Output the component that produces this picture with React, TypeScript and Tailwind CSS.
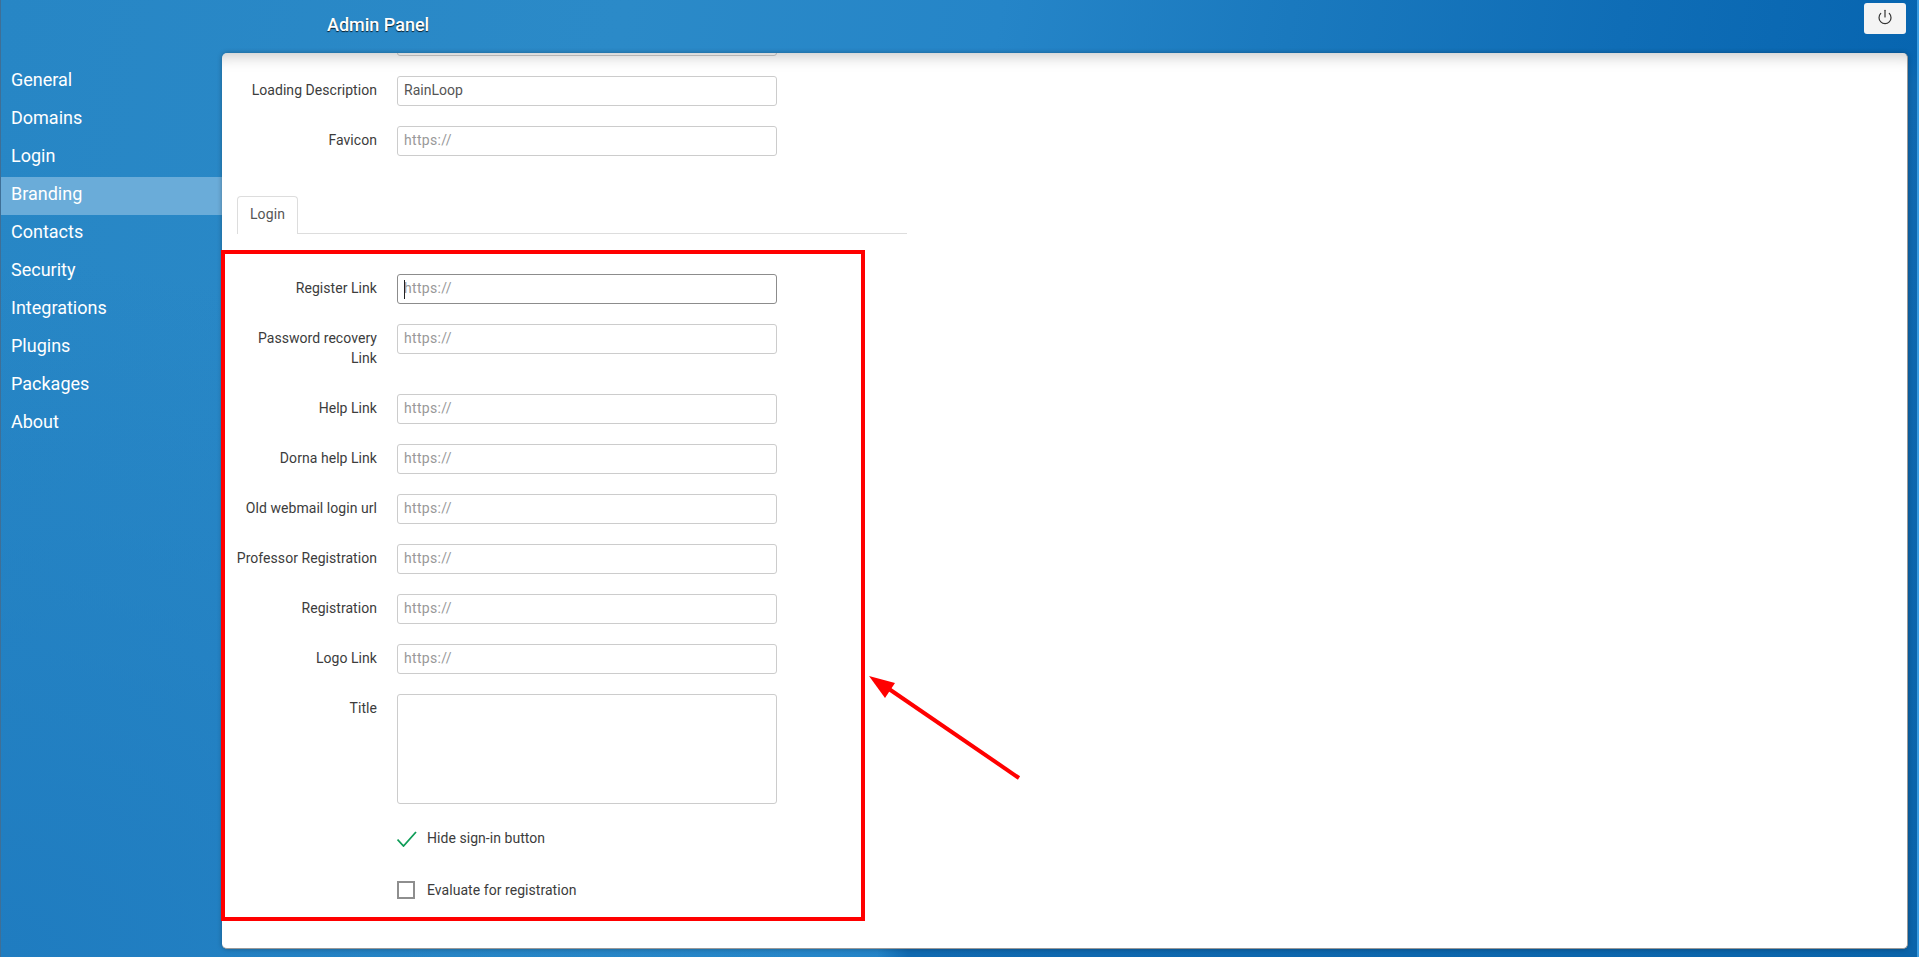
import { Power } from 'lucide-react';

const navItems = ['General', 'Domains', 'Login', 'Branding', 'Contacts', 'Security', 'Integrations', 'Plugins', 'Packages', 'About'];

function Field({ label, value, focused, labelClass }: { label: string; value?: string; focused?: boolean; labelClass?: string }) {
  return (
    <div className={`flex items-start ${labelClass ?? 'mb-5'}`}>
      <label className="-ml-[2px] w-[142px] pt-[4px] text-right text-[14px] leading-[20px] tracking-[0.05px] text-[#3c3c3c]">{label}</label>
      <div className={`relative ml-5 flex h-[30px] w-[380px] items-center rounded-[3px] border px-[6px] pb-[1px] text-[14px] ${focused ? 'border-[#8c8c8c]' : 'border-[#ccc]'} ${value ? 'text-[#555]' : 'tracking-[0.3px] text-[#999]'}`}>
        {focused && <span className="absolute top-[5px] left-[6px] h-[19px] w-px bg-[#222]" />}
        {value ?? 'https://'}
      </div>
    </div>
  );
}

export default function App() {
  return (
    <div className="flex h-[957px] w-full flex-col overflow-hidden border-r-2 border-l border-r-[#3a9ce0] border-l-[#3f6f96] bg-[radial-gradient(1040px_900px_at_100%_100%,#0a64aa_0%,#1069b0_97%,transparent_100%),radial-gradient(800px_700px_at_0_100%,#1f7cc0,transparent),linear-gradient(100deg,#2786c5_0%,#2b8ac8_30%,#2585c8_48%,#1a79be_62%,#0f6db6_78%,#0361ad_100%)] font-['Roboto',sans-serif]">
      <header className="flex h-[53px] shrink-0">
        <div className="w-[325px] pt-[14px] pl-[326px] text-[18px] leading-[22px] font-medium whitespace-nowrap text-white [text-shadow:0_1px_1px_rgba(0,0,0,0.8)]">Admin Panel</div>
        <button className="mt-[3px] mr-[11px] ml-auto flex h-[31px] w-[42px] items-center justify-center rounded-[3px] bg-[#f4f4f4] pb-[3px] text-[#333]">
          <Power size={16} strokeWidth={1.8} />
        </button>
      </header>
      <div className="flex min-h-0 flex-1 pb-2">
        <nav className="w-[221px] shrink-0 pt-[10px]">
          {navItems.map((item) => (
            <div key={item} className={`h-[38px] pl-[10px] text-[18px] leading-[34px] text-white ${item === 'Branding' ? 'bg-[#6aacd9]' : ''}`}>{item}</div>
          ))}
        </nav>
        <main className="relative mr-[9px] min-w-0 flex-1 overflow-hidden rounded-[5px] border-r border-b border-[#999] bg-white shadow-[0_0_5px_rgba(0,0,0,0.3)]">
          <div className="pointer-events-none absolute inset-x-0 top-0 z-10 h-[40px] rounded-t-[5px] shadow-[inset_0_20px_16px_-18px_rgba(0,0,0,0.25)]" />
          <div className="-mt-[27px] pl-[15px]">
            <Field label="" value=" " />
            <Field label="Loading Description" value="RainLoop" />
            <Field label="Favicon" labelClass="mb-10" />
            <div className="flex h-[38px] w-[670px] border-b border-[#ddd]">
              <div className="flex h-[38px] w-[61px] items-center justify-center rounded-t-[4px] border border-b-0 border-[#ddd] bg-white pb-[2px] text-[14px] tracking-[0.1px] text-[#555]">Login</div>
            </div>
            <div className="pt-[40px]">
              <Field label="Register Link" focused />
              <Field label="Password recovery Link" labelClass="mb-[26px]" />
              <Field label="Help Link" />
              <Field label="Dorna help Link" />
              <Field label="Old webmail login url" />
              <Field label="Professor Registration" />
              <Field label="Registration" />
              <Field label="Logo Link" />
              <div className="flex items-start">
                <label className="w-[140px] pt-[4px] text-right text-[14px] leading-[20px] tracking-[0.05px] text-[#3c3c3c]">Title</label>
                <div className="ml-5 h-[110px] w-[380px] rounded-[3px] border border-[#ccc]" />
              </div>
              <div className="mt-[24px] ml-[160px] flex h-[20px] items-center text-[14px] tracking-[0.05px] text-[#3c3c3c]">
                <svg width="20" height="16" viewBox="0 0 20 16" className="mt-[2px] mr-[10px]" fill="none" stroke="#0f9d58" strokeWidth="1.8">
                  <path d="M0.5 8.5 L6.5 15 L19 1" />
                </svg>
                Hide sign-in button
              </div>
              <div className="mt-[32px] ml-[160px] flex h-[20px] items-center text-[14px] tracking-[0.05px] text-[#3c3c3c]">
                <span className="mr-[12px] h-[18px] w-[18px] border-2 border-[#8e8e8e]" />
                Evaluate for registration
              </div>
            </div>
          </div>
        </main>
      </div>
      {/* red annotation on top of the screenshot */}
      <svg className="pointer-events-none absolute top-0 left-0" width="1919" height="957" fill="none">
        <rect x="223" y="252" width="640" height="667" stroke="#ff0000" strokeWidth="4" />
        <path d="M1019 778 L889 689" stroke="#ff0000" strokeWidth="4" />
        <path d="M869 676 L895 683 L885 698 Z" fill="#ff0000" />
      </svg>
    </div>
  );
}
